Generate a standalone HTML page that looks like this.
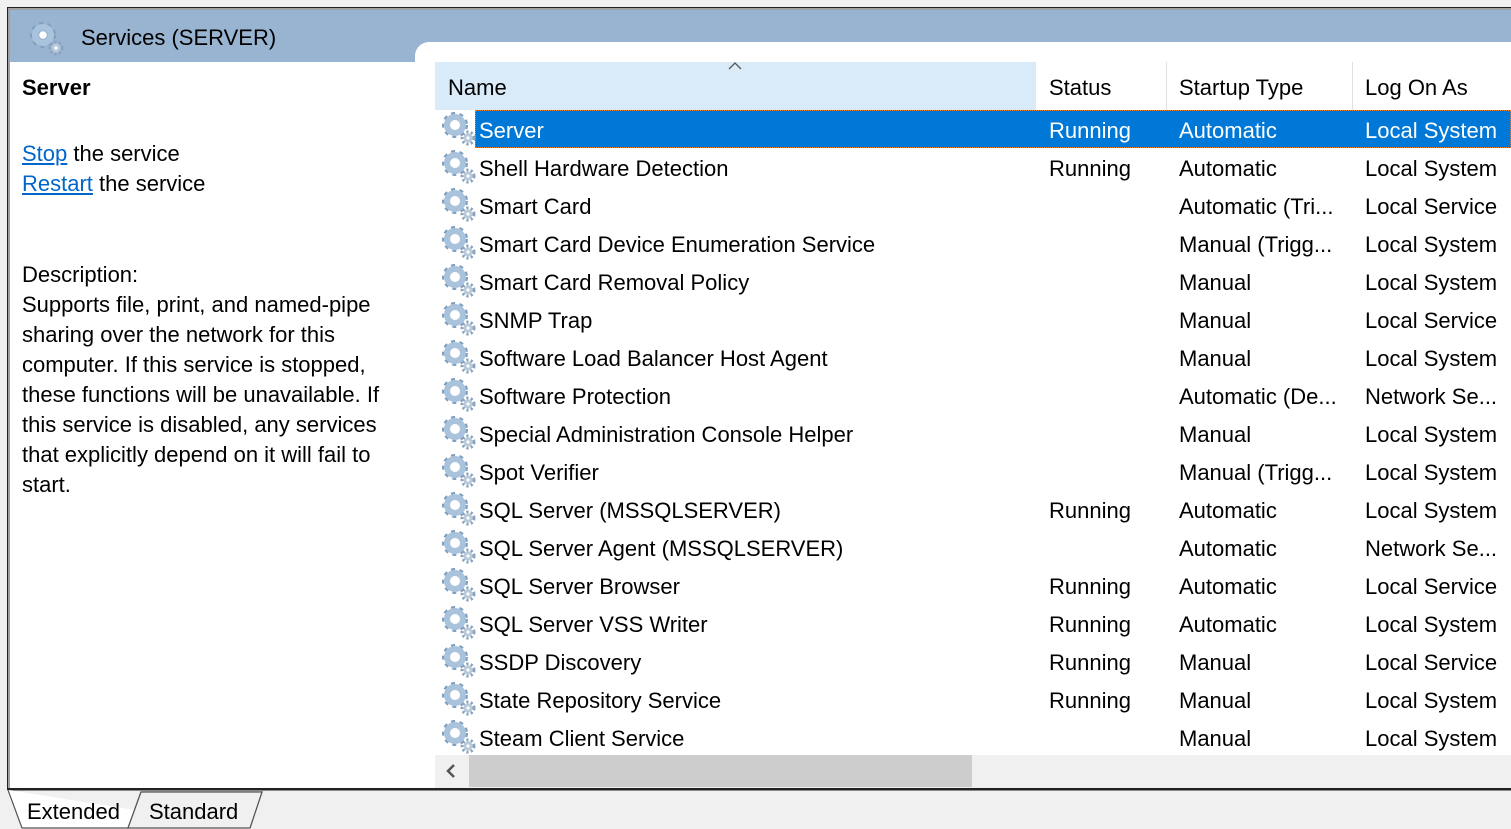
<!DOCTYPE html>
<html><head><meta charset="utf-8"><style>
*{margin:0;padding:0;box-sizing:border-box}
body{width:1511px;height:829px;background:#f0f0f0;font-family:"Liberation Sans",sans-serif;font-size:22px;color:#000;position:relative;overflow:hidden}
.a{position:absolute;white-space:nowrap}
.frame{position:absolute;left:7px;top:7px;width:1510px;height:783px;border:1px solid #222;border-right:none;background:#a0a0a0;padding:1px}
.hdr{position:absolute;left:10px;top:10px;width:1501px;height:52px;background:#99b4d1}
.rp{position:absolute;left:415px;top:42px;width:1100px;height:746px;background:#fff;border-top-left-radius:14px}
.lp{position:absolute;left:10px;top:62px;width:410px;height:726px;background:#fff}
a{color:#0066cc;text-decoration:underline}
</style></head><body>
<svg width="0" height="0" style="position:absolute"><defs>
<g id="g">
<circle cx="13" cy="13" r="10.5" fill="none" stroke="#7f9fbf" stroke-width="5" stroke-dasharray="3.6 4"/>
<circle cx="13" cy="13" r="8" fill="none" stroke="#a9c3dc" stroke-width="6"/>
<circle cx="13" cy="13" r="3.8" fill="#fff"/>
<circle cx="26" cy="26" r="6" fill="none" stroke="#8aa4bf" stroke-width="3" stroke-dasharray="2.2 2.2"/>
<circle cx="26" cy="26" r="4.5" fill="#b8c9da"/>
<circle cx="26" cy="26" r="1.6" fill="#fff"/>
</g></defs></svg>
<div class="frame"></div>
<div class="hdr"></div>
<svg class="a" style="left:30px;top:22px" width="34" height="34"><use href="#g"/></svg>
<div class="a" style="left:81px;top:25px">Services (SERVER)</div>
<div class="rp"></div>
<div class="lp"></div>
<div class="a" style="left:22px;top:75px;font-weight:bold">Server</div>
<div class="a" style="left:22px;top:141px"><a>Stop</a> the service</div>
<div class="a" style="left:22px;top:171px"><a>Restart</a> the service</div>
<div class="a" style="left:22px;top:260px;line-height:30px;white-space:normal;width:400px">Description:<br>Supports file, print, and named-pipe<br>sharing over the network for this<br>computer. If this service is stopped,<br>these functions will be unavailable. If<br>this service is disabled, any services<br>that explicitly depend on it will fail to<br>start.</div>
<div class="a" style="left:435px;top:62px;width:601px;height:48px;background:#d9ebf9"></div>
<div class="a" style="left:1166px;top:62px;width:1px;height:48px;background:#e0e0e0"></div>
<div class="a" style="left:1352px;top:62px;width:1px;height:48px;background:#e0e0e0"></div>
<svg class="a" style="left:728px;top:60px" width="16" height="10"><path d="M1 9 L7 3 L13 9" fill="none" stroke="#555" stroke-width="1.3"/></svg>
<div class="a" style="left:448px;top:75px">Name</div>
<div class="a" style="left:1049px;top:75px">Status</div>
<div class="a" style="left:1179px;top:75px">Startup Type</div>
<div class="a" style="left:1365px;top:75px">Log On As</div>
<div id="rows"></div>
<script>
var d=[["Server","Running","Automatic","Local System"],["Shell Hardware Detection","Running","Automatic","Local System"],["Smart Card","","Automatic (Tri...","Local Service"],["Smart Card Device Enumeration Service","","Manual (Trigg...","Local System"],["Smart Card Removal Policy","","Manual","Local System"],["SNMP Trap","","Manual","Local Service"],["Software Load Balancer Host Agent","","Manual","Local System"],["Software Protection","","Automatic (De...","Network Se..."],["Special Administration Console Helper","","Manual","Local System"],["Spot Verifier","","Manual (Trigg...","Local System"],["SQL Server (MSSQLSERVER)","Running","Automatic","Local System"],["SQL Server Agent (MSSQLSERVER)","","Automatic","Network Se..."],["SQL Server Browser","Running","Automatic","Local Service"],["SQL Server VSS Writer","Running","Automatic","Local System"],["SSDP Discovery","Running","Manual","Local Service"],["State Repository Service","Running","Manual","Local System"],["Steam Client Service","","Manual","Local System"]];
var h="";d.forEach(function(r,i){var t=110+38*i;
if(i==0)h+='<div class="a" style="left:475px;top:'+t+'px;width:1036px;height:38px;background:#0078d7;border:1px dotted #f08020"></div>';
h+='<svg class="a" style="left:442px;top:'+(t+2)+'px" width="34" height="34"><use href="#g"/></svg>';
var c=i==0?"color:#fff;":"";
h+='<div class="a" style="'+c+'left:479px;top:'+(t+8)+'px">'+r[0]+'</div>';
h+='<div class="a" style="'+c+'left:1049px;top:'+(t+8)+'px">'+r[1]+'</div>';
h+='<div class="a" style="'+c+'left:1179px;top:'+(t+8)+'px">'+r[2]+'</div>';
h+='<div class="a" style="'+c+'left:1365px;top:'+(t+8)+'px">'+r[3]+'</div>';});
document.getElementById("rows").innerHTML=h;
</script>
<div class="a" style="left:435px;top:755px;width:1076px;height:33px;background:#f0f0f0"></div>
<div class="a" style="left:469px;top:755px;width:503px;height:32px;background:#cdcdcd"></div>
<svg class="a" style="left:444px;top:763px" width="14" height="16"><path d="M10 2 L4 8 L10 14" fill="none" stroke="#555" stroke-width="2.5"/></svg>
<div class="a" style="left:8px;top:788px;width:1503px;height:2px;background:#222"></div>
<div class="a" style="left:8px;top:790px;width:1503px;height:1px;background:#888"></div>
<svg class="a" style="left:0;top:790px" width="270" height="39"><path d="M8 0 L22 38 L128 38 L141 2 L262 2 L250 38" fill="#fff" stroke="#555" stroke-width="1.2"/><path d="M141 2 L262 2 L250 38 L128 38 Z" fill="#f0f0f0" stroke="#555" stroke-width="1.2"/></svg>
<div class="a" style="left:27px;top:799px">Extended</div>
<div class="a" style="left:149px;top:799px">Standard</div>
</body></html>
